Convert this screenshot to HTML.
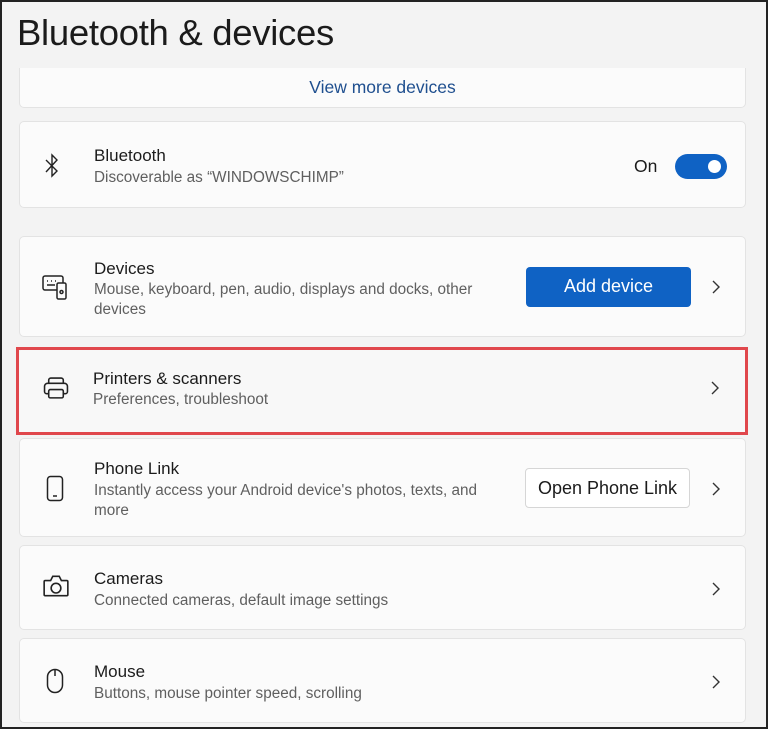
<!DOCTYPE html>
<html><head><style>
*{margin:0;padding:0;box-sizing:border-box}
body{width:768px;height:729px;background:#222;font-family:"Liberation Sans",sans-serif;overflow:hidden}
.frame{position:absolute;left:2px;top:2px;width:764px;height:725px;background:#f3f3f3;overflow:hidden}
h1{position:absolute;left:15px;top:10px;font-size:36.5px;font-weight:normal;color:#1b1b1b;letter-spacing:-0.3px}
.card{position:absolute;left:17px;width:727px;background:#fbfbfb;border:1px solid #e3e3e3;border-radius:5px}
.ic{position:absolute;left:22px}
.t{position:absolute;left:74px;font-size:17px;color:#1b1b1b}
.s{position:absolute;left:74px;font-size:15.3px;color:#5f5f5f;line-height:20px}
.chev{position:absolute;left:691px;width:9px;height:16px}
.red{position:absolute;left:14px;top:345px;width:732px;height:88px;border:3px solid #e0474c}
</style></head><body><div class="frame">
<h1>Bluetooth &amp; devices</h1>
<div class="card" style="top:66px;height:40px;border-top:none;border-radius:0 0 5px 5px"><div style="position:absolute;width:100%;text-align:center;top:9px;font-size:17.5px;color:#1f4f8f">View more devices</div></div>
<div class="card" style="top:119px;height:87px">
<svg class="ic" style="top:31px" width="20" height="26" viewBox="0 0 20 26" fill="none" stroke="#222" stroke-width="1.4"><path d="M4 7l11 11-5 5V2l5 5L4 19"/></svg>
<div class="t" style="top:24px">Bluetooth</div><div class="s" style="top:46px">Discoverable as “WINDOWSCHIMP”</div>
<div style="position:absolute;left:614px;top:34px;font-size:17.5px;color:#1b1b1b">On</div>
<div style="position:absolute;left:655px;top:32px;width:52px;height:25px;border-radius:13px;background:#0f62c4"><div style="position:absolute;right:6px;top:6px;width:13px;height:13px;border-radius:50%;background:#fff"></div></div>
</div>
<div class="card" style="top:234px;height:101px">
<svg class="ic" style="top:37px" width="28" height="27" viewBox="0 0 28 27" fill="none" stroke="#222" stroke-width="1.5"><rect x="1" y="2" width="20" height="14" rx="2"/><path d="M5 7h1M9 7h1M13 7h1M5 11h8"/><rect x="15" y="9" width="9" height="16" rx="1.5" fill="#fbfbfb"/><circle cx="19.5" cy="18" r="1.5"/></svg>
<div class="t" style="top:22px">Devices</div><div class="s" style="top:43px;width:390px">Mouse, keyboard, pen, audio, displays and docks, other devices</div>
<div style="position:absolute;left:506px;top:30px;width:165px;height:40px;border-radius:4px;background:#0f62c4;color:#fff;font-size:18px;text-align:center;line-height:39px">Add device</div>
<svg class="chev" style="top:42px" viewBox="0 0 9 16" fill="none" stroke="#333" stroke-width="1.4"><path d="M2 2l6 6-6 6"/></svg>
</div>
<div class="card" style="top:347px;height:85px;border:none;background:#f8f8f8">
<svg class="ic" style="top:27px;left:23px" width="28" height="25" viewBox="0 0 26 24" fill="none" stroke="#222" stroke-width="1.5"><path d="M6 7V4a2 2 0 012-2h10a2 2 0 012 2v3"/><path d="M6 17H4a2 2 0 01-2-2v-5a3 3 0 013-3h16a3 3 0 013 3v5a2 2 0 01-2 2h-2"/><rect x="6" y="13" width="14" height="8" rx="1.5"/></svg>
<div class="t" style="top:20px">Printers &amp; scanners</div><div class="s" style="top:41px">Preferences, troubleshoot</div>
<svg class="chev" style="top:31px" viewBox="0 0 9 16" fill="none" stroke="#333" stroke-width="1.4"><path d="M2 2l6 6-6 6"/></svg>
</div>
<div class="red"></div>
<div class="card" style="top:436px;height:99px">
<svg class="ic" style="top:36px;left:26px" width="18" height="28" viewBox="0 0 18 28" fill="none" stroke="#222" stroke-width="1.5"><rect x="1.5" y="1.5" width="15" height="24" rx="3"/><path d="M7 21h4"/></svg>
<div class="t" style="top:20px">Phone Link</div><div class="s" style="top:42px;width:395px">Instantly access your Android device's photos, texts, and more</div>
<div style="position:absolute;left:505px;top:29px;width:165px;height:40px;border-radius:4px;background:#fff;border:1px solid #d6d6d6;color:#1b1b1b;font-size:18px;text-align:center;line-height:38px">Open Phone Link</div>
<svg class="chev" style="top:42px" viewBox="0 0 9 16" fill="none" stroke="#333" stroke-width="1.4"><path d="M2 2l6 6-6 6"/></svg>
</div>
<div class="card" style="top:543px;height:85px">
<svg class="ic" style="top:27px;left:22px" width="28" height="26" viewBox="0 0 26 24" fill="none" stroke="#222" stroke-width="1.5"><path d="M3 7h5l2-4h6l2 4h5a1 1 0 011 1v12a1 1 0 01-1 1H3a1 1 0 01-1-1V8a1 1 0 011-1z"/><circle cx="13" cy="14" r="4.5"/></svg>
<div class="t" style="top:23px">Cameras</div><div class="s" style="top:45px">Connected cameras, default image settings</div>
<svg class="chev" style="top:35px" viewBox="0 0 9 16" fill="none" stroke="#333" stroke-width="1.4"><path d="M2 2l6 6-6 6"/></svg>
</div>
<div class="card" style="top:636px;height:85px">
<svg class="ic" style="top:29px;left:26px" width="18" height="26" viewBox="0 0 18 26" fill="none" stroke="#222" stroke-width="1.5"><rect x="1.5" y="1.5" width="15" height="23" rx="7.5"/><path d="M9 2v6"/></svg>
<div class="t" style="top:23px">Mouse</div><div class="s" style="top:45px">Buttons, mouse pointer speed, scrolling</div>
<svg class="chev" style="top:35px" viewBox="0 0 9 16" fill="none" stroke="#333" stroke-width="1.4"><path d="M2 2l6 6-6 6"/></svg>
</div>
</div></body></html>
